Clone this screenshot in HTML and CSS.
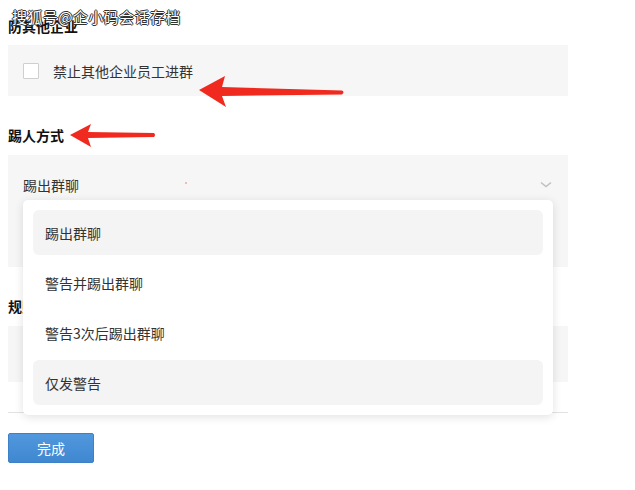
FILE: index.html
```html
<!DOCTYPE html>
<html lang="zh">
<head>
<meta charset="utf-8">
<link rel="stylesheet" href="styles.css">
</head>
<body>
<div class="page">
  <div class="watermark">搜狐号@企小码会话存档</div>
  <div class="title t1">防其他企业</div>
  <div class="box box-check">
    <span class="checkbox"></span>
    <span class="label">禁止其他企业员工进群</span>
  </div>

  <div class="title t2">踢人方式</div>
  <div class="box box-select">
    <div class="select-row">
      <span class="value">踢出群聊</span>
      <span class="dot"></span>
      <svg class="chev" width="14" height="8" viewBox="0 0 14 8"><path d="M2 1.5 L7 5.5 L12 1.5" fill="none" stroke="#c0c0c0" stroke-width="1.5"/></svg>
    </div>
    <div class="menu">
      <div class="item active">踢出群聊</div>
      <div class="item">警告并踢出群聊</div>
      <div class="item">警告3次后踢出群聊</div>
      <div class="item active">仅发警告</div>
    </div>
  </div>

  <div class="title t3">规则设置</div>
  <div class="box box-rule"></div>
  <div class="divider"></div>
  <button class="done">完成</button>

  <svg class="arrow a1" width="160" height="40" viewBox="0 0 160 40">
    <path d="M1 17 L27 3 L24 14 L144 17.5 Q147 19 144 21.5 L24 23 L28 34 Z" fill="#f02a1e"/>
  </svg>
  <svg class="arrow a2" width="100" height="30" viewBox="0 0 100 30">
    <path d="M1 15 L22 4 L19 12 L85 13 Q87 15 85 17 L19 18 L22 27 Z" fill="#f02a1e"/>
  </svg>
</div>
</body>
</html>
```

FILE: styles.css
```css
* { box-sizing: border-box; }
html, body { margin: 0; padding: 0; background: #fff; }
body {
  font-family: "Noto Sans CJK SC", "Noto Sans", sans-serif;
  color: #222;
  font-size: 14px;
}
.page {
  position: relative;
  width: 635px;
  height: 490px;
  padding: 16px 67px 0 8px;
}
.watermark {
  position: absolute;
  left: 12px;
  top: 6px;
  font-size: 15px;
  line-height: 22px;
  color: #fff;
  letter-spacing: 0.4px;
  text-shadow: 0 0 1px #222, 1px 0 0 #333, -1px 0 0 #333, 0 1px 0 #333, 0 -1px 0 #333;
  z-index: 5;
}
.title {
  font-size: 14px;
  font-weight: bold;
  line-height: 20px;
  color: #111;
}
.box {
  background: #f6f6f6;
}
.box-check {
  margin-top: 9px;
  height: 51px;
  display: flex;
  align-items: center;
  padding: 0 15px;
}
.checkbox {
  width: 16px;
  height: 16px;
  border: 1px solid #cfcfcf;
  background: #fff;
  border-radius: 1px;
  margin-right: 14px;
}
.label { font-size: 14px; color: #333; }
.t2 { margin-top: 29px; }
.box-select {
  position: relative;
  margin-top: 10px;
  height: 112px;
  padding: 0 15px;
}
.select-row {
  height: 60px;
  display: flex;
  align-items: center;
  position: relative;
}
.value { font-size: 14px; color: #333; }
.dot {
  position: absolute;
  left: 162px;
  top: 27px;
  width: 2px;
  height: 2px;
  background: #f3b7b7;
}
.chev { margin-left: auto; }
.menu {
  position: absolute;
  left: 15px;
  top: 45px;
  width: 530px;
  background: #fff;
  border-radius: 5px;
  box-shadow: 0 2px 10px rgba(0,0,0,0.12);
  padding: 10px;
  display: flex;
  flex-direction: column;
  gap: 5px;
  z-index: 3;
}
.item {
  height: 45px;
  display: flex;
  align-items: center;
  padding-left: 12px;
  border-radius: 6px;
  font-size: 14px;
  color: #333;
}
.item.active { background: #f4f4f4; }
.t3 { margin-top: 29px; }
.box-rule {
  margin-top: 10px;
  height: 56px;
}
.divider {
  margin-top: 30px;
  height: 1px;
  background: #e2e2e2;
}
.done {
  margin-top: 20px;
  width: 86px;
  height: 30px;
  border: 1px solid #3d82c9;
  border-radius: 2px;
  background: linear-gradient(#5198de, #3f87d0);
  color: #fff;
  font-family: "Noto Sans CJK SC", sans-serif;
  font-size: 14px;
  padding: 0;
}
.arrow { position: absolute; z-index: 6; }
.a1 { left: 198px; top: 73px; }
.a2 { left: 69px; top: 120px; }
```
